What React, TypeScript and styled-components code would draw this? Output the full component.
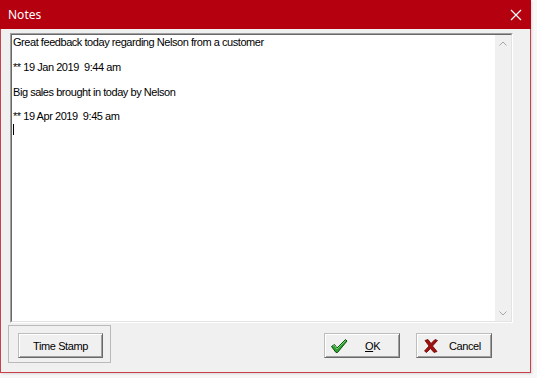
import React from "react";
import styled, { createGlobalStyle } from "styled-components";

const Global = createGlobalStyle`
  html, body { margin: 0; padding: 0; background: #f7f7f7; }
  body { width: 537px; height: 378px; overflow: hidden; font-family: "Liberation Sans", Arial, sans-serif; }
`;

const Window = styled.div`
  width: 531px;
  height: 373px;
  box-sizing: border-box;
  border: 1px solid #c8404a;
  border-top: none;
  background: #f0f0f0;
  display: flex;
  flex-direction: column;
  box-shadow: 1px 1px 2px rgba(0,0,0,0.12);
`;

const TitleBar = styled.div`
  height: 29px;
  margin: 0 -1px;
  background: #b4000f;
  display: flex;
  align-items: center;
  justify-content: space-between;
  padding: 0 9px 0 8px;
  color: #fff;
  font-family: "Segoe UI", "Noto Sans", "Liberation Sans", sans-serif;
  font-size: 12px;
  flex-shrink: 0;
`;

const Title = styled.span`
  padding-bottom: 1px;
`;

const Close = styled.svg`
  width: 12px;
  height: 12px;
`;

const Content = styled.div`
  flex: 1;
  display: flex;
  flex-direction: column;
  padding: 4px 17px 0 7px;
`;

const NoteArea = styled.div`
  margin-left: 2px;
  height: 290px;
  box-sizing: border-box;
  display: flex;
  border-top: 1px solid #a0a0a0;
  border-left: 1px solid #a0a0a0;
  border-right: 1px solid #ffffff;
  border-bottom: 1px solid #ffffff;
`;

const NoteInner = styled.div`
  flex: 1;
  display: flex;
  border-top: 1px solid #696969;
  border-left: 1px solid #696969;
  border-right: 1px solid #e3e3e3;
  border-bottom: 1px solid #e3e3e3;
  background: #fff;
`;

const NoteText = styled.div`
  flex: 1;
  padding: 1px 0 0 1px;
  font-family: "Liberation Sans", Arial, sans-serif;
  font-size: 11px;
  letter-spacing: -0.45px;
  line-height: 12.4px;
  color: #000;
`;

const Line = styled.div`
  height: 12.4px;
  white-space: pre;
`;

const Caret = styled.div`
  width: 1px;
  height: 11px;
  margin-top: 1px;
  background: #000;
`;

const ScrollBar = styled.div`
  width: 16px;
  background: #f0f0f0;
  display: flex;
  flex-direction: column;
  justify-content: space-between;
  align-items: center;
  padding: 6px 0 5px;
`;

const Chevron = styled.svg`
  width: 8px;
  height: 5px;
`;

const Footer = styled.div`
  display: flex;
  justify-content: space-between;
  align-items: flex-start;
  margin-top: 2px;
`;

const Panel = styled.div`
  width: 103px;
  height: 38px;
  box-sizing: border-box;
  border: 1px solid #b9b9b9;
  padding: 7px 0 0 9px;
`;

const Button = styled.button<{ $w: number }>`
  width: ${(p) => p.$w}px;
  height: 25px;
  box-sizing: border-box;
  background: #f0f0f0;
  border-top: 1px solid #bdbdbd;
  border-left: 1px solid #bdbdbd;
  border-right: 1px solid #696969;
  border-bottom: 1px solid #696969;
  box-shadow: inset 1px 1px 0 #ffffff, inset -1px -1px 0 #a0a0a0;
  display: flex;
  align-items: center;
  justify-content: center;
  padding: 0;
  font-family: "Liberation Sans", Arial, sans-serif;
  font-size: 11px;
  letter-spacing: -0.4px;
  color: #000;
  cursor: default;
`;

const IconButton = styled(Button)`
  justify-content: flex-start;
  padding-left: 5px;
`;

const BtnLabel = styled.span<{ $ml: number }>`
  margin-left: ${(p) => p.$ml}px;
`;

const Under = styled.span`
  text-decoration: underline;
`;

const Actions = styled.div`
  display: flex;
  gap: 16px;
  margin-top: 8px;
  margin-right: 21px;
`;

const Icon = styled.svg`
  width: 18px;
  height: 16px;
  flex-shrink: 0;
`;

export default function App() {
  const lines = [
    "Great feedback today regarding Nelson from a customer",
    "",
    "** 19 Jan 2019  9:44 am",
    "",
    "Big sales brought in today by Nelson",
    "",
    "** 19 Apr 2019  9:45 am",
  ];
  return (
    <>
      <Global />
      <Window>
        <TitleBar>
          <Title>Notes</Title>
          <Close viewBox="0 0 12 12">
            <path d="M1 1 L11 11 M11 1 L1 11" stroke="#fff" strokeWidth="1.2" />
          </Close>
        </TitleBar>
        <Content>
          <NoteArea>
            <NoteInner>
              <NoteText>
                {lines.map((l, i) => (
                  <Line key={i}>{l}</Line>
                ))}
                <Caret />
              </NoteText>
              <ScrollBar>
                <Chevron viewBox="0 0 8 5">
                  <path d="M0.5 4.5 L4 1 L7.5 4.5" fill="none" stroke="#a6a6a6" strokeWidth="1" />
                </Chevron>
                <Chevron viewBox="0 0 8 5">
                  <path d="M0.5 0.5 L4 4 L7.5 0.5" fill="none" stroke="#a6a6a6" strokeWidth="1" />
                </Chevron>
              </ScrollBar>
            </NoteInner>
          </NoteArea>
          <Footer>
            <Panel>
              <Button $w={85}>Time Stamp</Button>
            </Panel>
            <Actions>
              <IconButton $w={76}>
                <Icon viewBox="0 0 18 16">
                  <path
                    d="M1.5 8.5 L4.5 6.5 L7 10 L15.5 1.5 L17 3 L7.5 14.5 L6 14.5 Z"
                    fill="#2fa12f"
                    stroke="#0b4f0b"
                    strokeWidth="1"
                    strokeLinejoin="round"
                  />
                  <path d="M3 8.3 L4.5 7.4 L7 11 L15.5 2.6" fill="none" stroke="#8fe08f" strokeWidth="0.8" />
                </Icon>
                <BtnLabel $ml={17}>
                  <Under>O</Under>K
                </BtnLabel>
              </IconButton>
              <IconButton $w={76}>
                <Icon viewBox="0 0 18 16">
                  <path
                    d="M3 2.5 L6 1.5 L9 5.5 L13 1.5 L15.5 2.5 L10.5 8 L15 13.5 L12 14.5 L8.5 10.5 L4.5 14.5 L2.5 13 L7 8 Z"
                    fill="#a01010"
                    stroke="#6a0000"
                    strokeWidth="0.8"
                    strokeLinejoin="round"
                  />
                </Icon>
                <BtnLabel $ml={9}>Cancel</BtnLabel>
              </IconButton>
            </Actions>
          </Footer>
        </Content>
      </Window>
    </>
  );
}
